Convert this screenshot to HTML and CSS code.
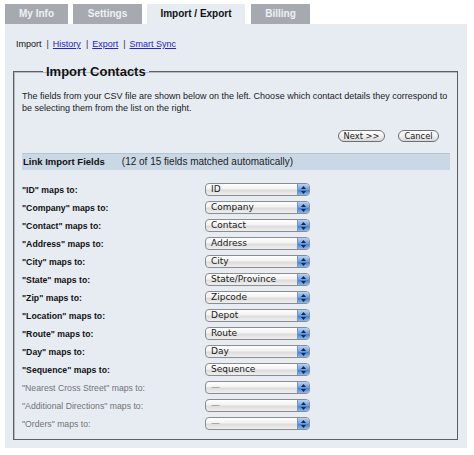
FILE: index.html
```html
<!DOCTYPE html>
<html>
<head>
<meta charset="utf-8">
<link rel="stylesheet" href="styles.css">
</head>
<body>
<div class="tabs">
  <div class="tab t1">My Info</div>
  <div class="tab t2">Settings</div>
  <div class="tab t3 active">Import / Export</div>
  <div class="tab t4">Billing</div>
</div>
<div class="panel">
  <div class="subnav">Import<span class="sep">|</span><a href="#">History</a><span class="sep">|</span><a href="#">Export</a><span class="sep">|</span><a href="#">Smart Sync</a></div>
  <fieldset class="box">
    <legend>Import Contacts</legend>
    <p class="desc">The fields from your CSV file are shown below on the left. Choose which contact details they correspond to be selecting them from the list on the right.</p>
    <div class="buttons">
      <button class="pill next">Next &gt;&gt;</button>
      <button class="pill cancel">Cancel</button>
    </div>
    <div class="header"><b>Link Import Fields</b><span class="note">(12 of 15 fields matched automatically)</span></div>
    <div class="rows">
      <div class="row"><span class="lbl">"ID" maps to:</span><div class="sel"><span class="val">ID</span><span class="arr"><svg width="5" height="8" viewBox="0 0 5 8"><path d="M2.5 0L5 3H0Z M2.5 8L5 5H0Z" fill="#1c2740"/></svg></span></div></div>
      <div class="row"><span class="lbl">"Company" maps to:</span><div class="sel"><span class="val">Company</span><span class="arr"><svg width="5" height="8" viewBox="0 0 5 8"><path d="M2.5 0L5 3H0Z M2.5 8L5 5H0Z" fill="#1c2740"/></svg></span></div></div>
      <div class="row"><span class="lbl">"Contact" maps to:</span><div class="sel"><span class="val">Contact</span><span class="arr"><svg width="5" height="8" viewBox="0 0 5 8"><path d="M2.5 0L5 3H0Z M2.5 8L5 5H0Z" fill="#1c2740"/></svg></span></div></div>
      <div class="row"><span class="lbl">"Address" maps to:</span><div class="sel"><span class="val">Address</span><span class="arr"><svg width="5" height="8" viewBox="0 0 5 8"><path d="M2.5 0L5 3H0Z M2.5 8L5 5H0Z" fill="#1c2740"/></svg></span></div></div>
      <div class="row"><span class="lbl">"City" maps to:</span><div class="sel"><span class="val">City</span><span class="arr"><svg width="5" height="8" viewBox="0 0 5 8"><path d="M2.5 0L5 3H0Z M2.5 8L5 5H0Z" fill="#1c2740"/></svg></span></div></div>
      <div class="row"><span class="lbl">"State" maps to:</span><div class="sel"><span class="val">State/Province</span><span class="arr"><svg width="5" height="8" viewBox="0 0 5 8"><path d="M2.5 0L5 3H0Z M2.5 8L5 5H0Z" fill="#1c2740"/></svg></span></div></div>
      <div class="row"><span class="lbl">"Zip" maps to:</span><div class="sel"><span class="val">Zipcode</span><span class="arr"><svg width="5" height="8" viewBox="0 0 5 8"><path d="M2.5 0L5 3H0Z M2.5 8L5 5H0Z" fill="#1c2740"/></svg></span></div></div>
      <div class="row"><span class="lbl">"Location" maps to:</span><div class="sel"><span class="val">Depot</span><span class="arr"><svg width="5" height="8" viewBox="0 0 5 8"><path d="M2.5 0L5 3H0Z M2.5 8L5 5H0Z" fill="#1c2740"/></svg></span></div></div>
      <div class="row"><span class="lbl">"Route" maps to:</span><div class="sel"><span class="val">Route</span><span class="arr"><svg width="5" height="8" viewBox="0 0 5 8"><path d="M2.5 0L5 3H0Z M2.5 8L5 5H0Z" fill="#1c2740"/></svg></span></div></div>
      <div class="row"><span class="lbl">"Day" maps to:</span><div class="sel"><span class="val">Day</span><span class="arr"><svg width="5" height="8" viewBox="0 0 5 8"><path d="M2.5 0L5 3H0Z M2.5 8L5 5H0Z" fill="#1c2740"/></svg></span></div></div>
      <div class="row"><span class="lbl">"Sequence" maps to:</span><div class="sel"><span class="val">Sequence</span><span class="arr"><svg width="5" height="8" viewBox="0 0 5 8"><path d="M2.5 0L5 3H0Z M2.5 8L5 5H0Z" fill="#1c2740"/></svg></span></div></div>
      <div class="row off"><span class="lbl">"Nearest Cross Street" maps to:</span><div class="sel"><span class="val">—</span><span class="arr"><svg width="5" height="8" viewBox="0 0 5 8"><path d="M2.5 0L5 3H0Z M2.5 8L5 5H0Z" fill="#1c2740"/></svg></span></div></div>
      <div class="row off"><span class="lbl">"Additional Directions" maps to:</span><div class="sel"><span class="val">—</span><span class="arr"><svg width="5" height="8" viewBox="0 0 5 8"><path d="M2.5 0L5 3H0Z M2.5 8L5 5H0Z" fill="#1c2740"/></svg></span></div></div>
      <div class="row off"><span class="lbl">"Orders" maps to:</span><div class="sel"><span class="val">—</span><span class="arr"><svg width="5" height="8" viewBox="0 0 5 8"><path d="M2.5 0L5 3H0Z M2.5 8L5 5H0Z" fill="#1c2740"/></svg></span></div></div>
    </div>
  </fieldset>
</div>
</body>
</html>
```
FILE: styles.css
```css
html, body {
  margin: 0;
  padding: 0;
  background: #ffffff;
  font-family: "Liberation Sans", Arial, sans-serif;
  color: #111;
}
.tabs {
  display: flex;
  margin: 4px 0 0 5px;
  height: 20px;
}
.tab {
  height: 20px;
  line-height: 20px;
  text-align: center;
  font-size: 10px;
  font-weight: bold;
  background: #a6aab0;
  color: #eef1f5;
  margin-right: 5px;
}
.t1 { width: 63px; }
.t2 { width: 69px; }
.t3 { width: 98px; margin-right: 6px; }
.t4 { width: 59px; }
.tab.active {
  background: #e7ecf3;
  color: #111;
}
.panel {
  margin-left: 5px;
  width: 462px;
  background: #e7ecf3;
  padding-bottom: 8px;
  overflow: hidden;
}
.subnav {
  padding: 14px 0 0 11px;
  font-size: 9px;
  line-height: 13px;
  height: 13px;
  color: #111;
}
.subnav a {
  color: #2424c8;
  text-decoration: underline;
}
.sep {
  margin: 0 4px 0 5px;
  color: #333;
}
.box {
  margin: 13px 0 0 8px;
  width: 428px;
  padding: 0 7px 9px 8px;
  border: 1px solid #5e5e5e;
  box-shadow: inset 1px 1px 0 #b8bcc2;
  min-width: 0;
}
.box legend {
  margin-left: 21px;
  padding: 0 3px;
  font-size: 13px;
  line-height: 15px;
  font-weight: bold;
  color: #111;
}
.desc {
  margin: 11px 0 0 0;
  font-size: 9px;
  line-height: 12px;
  color: #1a1a1a;
}
.buttons {
  display: flex;
  justify-content: flex-end;
  gap: 13px;
  margin: 16px 11px 0 0;
}
.pill {
  height: 12px;
  padding: 0;
  border: 1px solid #6f6f6f;
  border-radius: 7px;
  background: linear-gradient(#ffffff, #f0f0f0 50%, #d8d8d8);
  font-family: "DejaVu Sans", sans-serif;
  font-size: 8.3px;
  line-height: 10px;
  color: #1a1a1a;
}
.next { width: 47px; }
.cancel { width: 41px; }
.header {
  margin-top: 11px;
  height: 16px;
  line-height: 16px;
  background: #cad8e6;
  border-top: 1px solid #b5c5d6;
  font-size: 9.5px;
  padding-left: 1px;
  color: #111;
}
.note {
  margin-left: 17px;
  font-size: 10px;
  color: #222;
}
.rows {
  margin-top: 13px;
  display: flex;
  flex-direction: column;
  gap: 5px;
}
.row {
  display: grid;
  grid-template-columns: 183px 105px;
  align-items: center;
  height: 13px;
}
.lbl {
  font-size: 8.7px;
  font-weight: bold;
  color: #111;
}
.row.off .lbl {
  font-weight: normal;
  color: #737373;
}
.sel {
  display: flex;
  height: 11px;
  border: 1px solid #8c8c8c;
  border-radius: 4px;
  background: linear-gradient(#ffffff, #f2f2f2 45%, #dcdcdc 55%, #efefef);
  overflow: hidden;
}
.val {
  flex: 1;
  padding-left: 5px;
  font-family: "DejaVu Sans", sans-serif;
  font-size: 9px;
  line-height: 11px;
  color: #1a1a1a;
}
.row.off .val {
  color: #777;
}
.arr {
  width: 11px;
  display: flex;
  align-items: center;
  justify-content: center;
  background: linear-gradient(#b7d3f5, #6b9fe4 50%, #3f7fd6 55%, #8cb8ee);
  border-left: 1px solid #7b93b3;
}
```
